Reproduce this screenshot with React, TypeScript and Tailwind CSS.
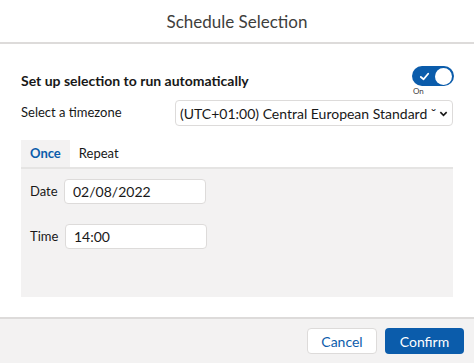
import { useState } from 'react';

export default function App() {
  const [enabled, setEnabled] = useState(true);
  const [tab, setTab] = useState<'once' | 'repeat'>('once');

  return (
    <div
      className="w-[474px] h-[363px] bg-white flex flex-col text-[#181818] overflow-hidden"
      style={{ fontFamily: 'Lato, "Open Sans", sans-serif' }}
    >
      {/* Header */}
      <div className="h-[44px] flex items-center justify-center border-b-2 border-[#dddbda] shrink-0">
        <h2 className="text-[17px] font-normal text-[#3e3e3c] pt-[1px]">Schedule Selection</h2>
      </div>

      {/* Body */}
      <div className="flex-1 px-[21px] pt-[22px] pb-[20px] flex flex-col">
        <div className="flex items-start justify-between">
          <span className="text-[14px] font-bold mt-[4px]">Set up selection to run automatically</span>
          <button
            onClick={() => setEnabled(!enabled)}
            className="flex flex-col items-start mr-[-1px]"
          >
            <span
              className={`w-[42px] h-[20px] rounded-full flex items-center px-[2px] ${
                enabled ? 'bg-[#0b5cab] justify-end' : 'bg-[#c9c9c9] justify-start'
              } relative`}
            >
              {enabled && (
                <svg
                  viewBox="0 0 12 12"
                  className="absolute left-[7px] top-[5px] w-[11px] h-[11px]"
                  fill="none"
                  stroke="white"
                  strokeWidth="2"
                  strokeLinecap="round"
                  strokeLinejoin="round"
                >
                  <path d="M2 6.5 L5 9 L10 3" />
                </svg>
              )}
              <span className="w-[17px] h-[17px] rounded-full bg-white" />
            </span>
            <span className="text-[8px] leading-[8px] text-[#444] mt-[1px] ml-[1px]">{enabled ? 'On' : 'Off'}</span>
          </button>
        </div>

        <div className="flex items-center justify-between mt-[5px]">
          <span className="text-[13px] text-[#181818]">Select a timezone</span>
          <div className="w-[278px] h-[26px] border border-[#dddbda] rounded-[4px] flex items-center pl-[4px] pr-[4px] gap-[2px]">
            <span className="text-[14px] whitespace-nowrap flex-1">
              (UTC+01:00) Central European Standard ˘
            </span>
            <svg viewBox="0 0 10 10" className="w-[9px] h-[9px] shrink-0" fill="none" stroke="#181818" strokeWidth="1.8">
              <path d="M1.5 3.5 L5 7 L8.5 3.5" />
            </svg>
          </div>
        </div>

        {/* Tabs */}
        <div className="mt-[14px] flex flex-col flex-1">
          <div className="flex h-[29px] border-b-2 border-[#e5e4e3]">
            <button
              onClick={() => setTab('once')}
              className={`px-[9px] text-[13px] font-bold ${
                tab === 'once' ? 'bg-[#f3f2f2] text-[#0b5cab]' : 'text-[#181818]'
              }`}
            >
              Once
            </button>
            <button
              onClick={() => setTab('repeat')}
              className={`px-[9px] text-[13px] ${
                tab === 'repeat' ? 'bg-[#f3f2f2] text-[#0b5cab] font-bold' : 'text-[#181818]'
              }`}
            >
              Repeat
            </button>
          </div>
          <div className="flex-1 bg-[#f3f2f2] pl-[9px] pt-[10px] flex flex-col gap-[20px]">
            <div className="flex items-center gap-[8px]">
              <span className="text-[13px] w-[26px]">Date</span>
              <div className="w-[142px] h-[25px] bg-white border border-[#dddbda] rounded-[4px] flex items-center px-[8px] text-[14px]">
                02/08/2022
              </div>
            </div>
            <div className="flex items-center gap-[9px]">
              <span className="text-[13px] w-[26px]">Time</span>
              <div className="w-[142px] h-[25px] bg-white border border-[#dddbda] rounded-[4px] flex items-center px-[8px] text-[14px]">
                14:00
              </div>
            </div>
          </div>
        </div>
      </div>

      {/* Footer */}
      <div className="h-[46px] shrink-0 bg-[#f3f2f2] border-t-2 border-[#dddbda] flex items-center justify-end gap-[8px] pr-[10px]">
        <button className="h-[26px] w-[70px] bg-white border border-[#dddbda] rounded-[4px] text-[14px] text-[#0b5cab]">
          Cancel
        </button>
        <button className="h-[26px] w-[79px] bg-[#0b5cab] rounded-[4px] text-[14px] text-white">
          Confirm
        </button>
      </div>
    </div>
  );
}
